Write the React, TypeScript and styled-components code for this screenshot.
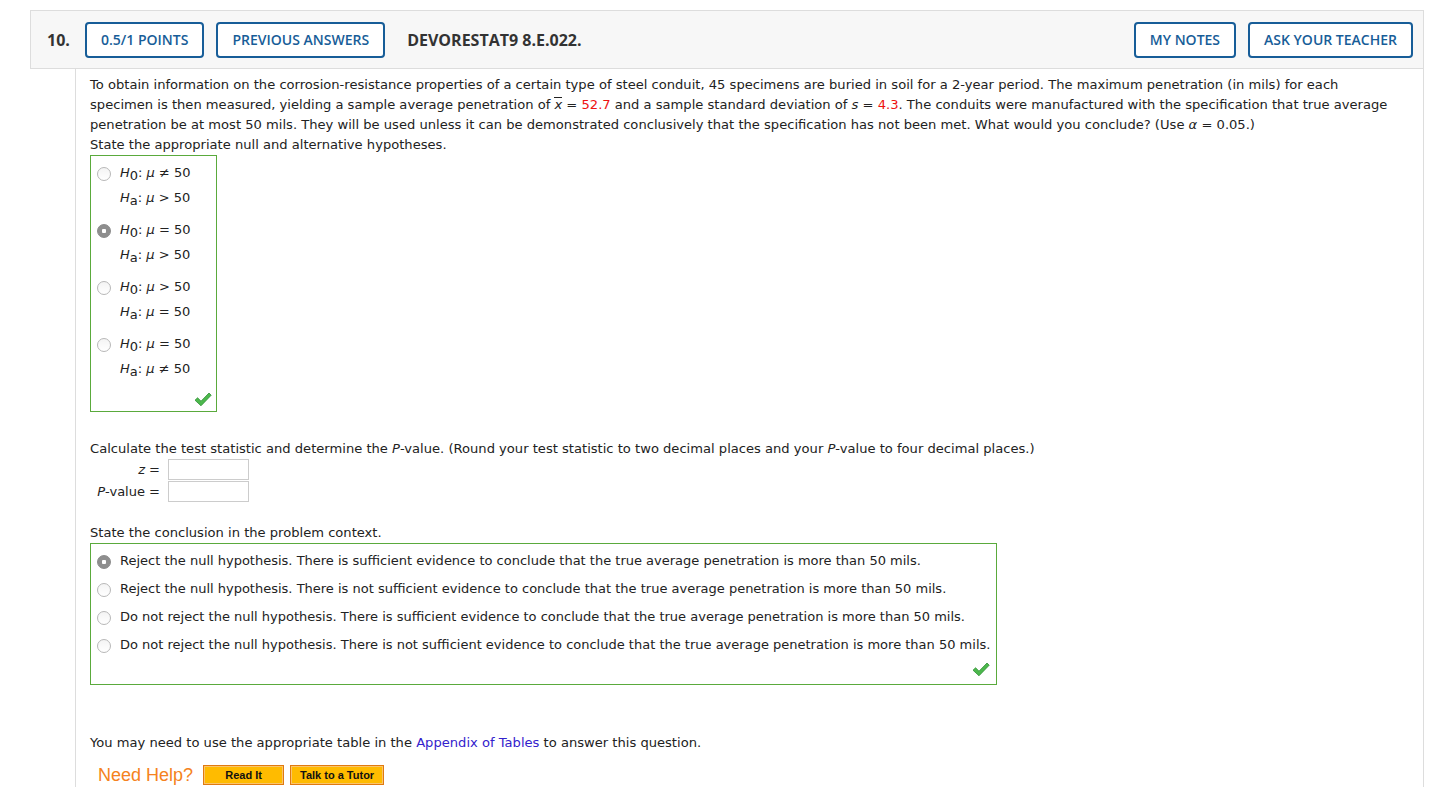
import React from 'react'
import styled, { createGlobalStyle } from 'styled-components'

const GlobalStyle = createGlobalStyle`
  html, body {
    margin: 0;
    padding: 0;
    background: #ffffff;
  }
  body {
    font-family: "DejaVu Sans", Verdana, sans-serif;
    color: #222222;
  }
`

type Hyp = { h0: string; ha: string }

const hypotheses: Hyp[] = [
  { h0: '≠ 50', ha: '> 50' },
  { h0: '= 50', ha: '> 50' },
  { h0: '> 50', ha: '= 50' },
  { h0: '= 50', ha: '≠ 50' },
]
const selectedHyp = 1

const conclusions = [
  'Reject the null hypothesis. There is sufficient evidence to conclude that the true average penetration is more than 50 mils.',
  'Reject the null hypothesis. There is not sufficient evidence to conclude that the true average penetration is more than 50 mils.',
  'Do not reject the null hypothesis. There is sufficient evidence to conclude that the true average penetration is more than 50 mils.',
  'Do not reject the null hypothesis. There is not sufficient evidence to conclude that the true average penetration is more than 50 mils.',
]
const selectedConclusion = 0

const Check = () => (
  <svg width="18" height="15" viewBox="0 0 18 15">
    <path
      d="M1 8.2 L3.6 5.8 L7 9.2 L15 1 L17.2 3.2 L7 13.8 Z"
      fill="#4cb84c"
      stroke="#2f8f35"
      strokeWidth="0.8"
      strokeLinejoin="round"
    />
  </svg>
)

const App: React.FC = () => {
  return (
    <>
      <GlobalStyle />
      <Page>
        <Header>
          <QNumber>10.</QNumber>
          <HeadButton>0.5/1 POINTS</HeadButton>
          <HeadButton>PREVIOUS ANSWERS</HeadButton>
          <QCode>DEVORESTAT9 8.E.022.</QCode>
          <Spacer />
          <HeadButton>MY NOTES</HeadButton>
          <HeadButton>ASK YOUR TEACHER</HeadButton>
        </Header>
        <Body>
          <Para>
            To obtain information on the corrosion-resistance properties of a certain type of steel conduit, 45
            specimens are buried in soil for a 2-year period. The maximum penetration (in mils) for each specimen is
            then measured, yielding a sample average penetration of <Xbar>x</Xbar> = <Red>52.7</Red> and a sample
            standard deviation of <i>s</i> = <Red>4.3</Red>. The conduits were manufactured with the specification
            that true average penetration be at most 50 mils. They will be used unless it can be demonstrated
            conclusively that the specification has not been met. What would you conclude? (Use <i>α</i> = 0.05.)
          </Para>
          <Para>State the appropriate null and alternative hypotheses.</Para>
          <HypBox>
            {hypotheses.map((h, i) => (
              <HypOption key={i}>
                <HypLine>
                  <Radio checked={i === selectedHyp} />
                  <span>
                    <i>H</i>
                    <Sub>0</Sub>: <i>μ</i> {h.h0}
                  </span>
                </HypLine>
                <HypLine>
                  <RadioGap />
                  <span>
                    <i>H</i>
                    <Sub>a</Sub>: <i>μ</i> {h.ha}
                  </span>
                </HypLine>
              </HypOption>
            ))}
            <CheckRow>
              <Check />
            </CheckRow>
          </HypBox>

          <Para $top={27}>
            Calculate the test statistic and determine the <i>P</i>-value. (Round your test statistic to two decimal
            places and your <i>P</i>-value to four decimal places.)
          </Para>
          <AnswerGrid>
            <AnswerLabel>
              <i>z</i> =
            </AnswerLabel>
            <AnswerInput />
            <AnswerLabel>
              <i>P</i>-value =
            </AnswerLabel>
            <AnswerInput />
          </AnswerGrid>

          <Para $top={21}>State the conclusion in the problem context.</Para>
          <ConcBox>
            {conclusions.map((c, i) => (
              <ConcLine key={i}>
                <Radio checked={i === selectedConclusion} />
                <span>{c}</span>
              </ConcLine>
            ))}
            <CheckRow $conc>
              <Check />
            </CheckRow>
          </ConcBox>

          <Para $top={48}>
            You may need to use the appropriate table in the <Link>Appendix of Tables</Link> to answer this question.
          </Para>
          <HelpRow>
            <NeedHelp>Need Help?</NeedHelp>
            <HelpButton $w={81}>Read It</HelpButton>
            <HelpButton $w={94}>Talk to a Tutor</HelpButton>
          </HelpRow>
        </Body>
      </Page>
    </>
  )
}

const Page = styled.div`
  margin: 10px 0 0 30px;
  width: 1394px;
`

const Header = styled.div`
  display: flex;
  align-items: center;
  gap: 12px;
  height: 57px;
  padding: 0 10px 0 16px;
  background: #f7f7f7;
  border: 1px solid #dddddd;
  font-family: "Open Sans", "Liberation Sans", sans-serif;
`

const QNumber = styled.div`
  font-size: 16px;
  font-weight: 700;
  color: #333333;
  width: 26px;
`

const HeadButton = styled.div`
  display: flex;
  align-items: center;
  height: 36px;
  box-sizing: border-box;
  padding: 0 14px;
  border: 2px solid #175d98;
  border-radius: 4px;
  background: #ffffff;
  color: #175d98;
  font-size: 14px;
  font-weight: 600;
  white-space: nowrap;
`

const QCode = styled.div`
  margin-left: 10px;
  font-size: 16px;
  font-weight: 700;
  color: #333333;
`

const Spacer = styled.div`
  flex: 1;
`

const Body = styled.div`
  margin-left: 45px;
  border-left: 1px solid #dddddd;
  border-right: 1px solid #dddddd;
  padding: 6px 0 4px 14px;
  font-size: 13px;
  line-height: 20px;
`

const Para = styled.div<{ $top?: number }>`
  margin-top: ${(p) => p.$top ?? 0}px;
  padding-right: 26px;
  font-size: 13.1px;
`

const Red = styled.span`
  color: #ee1111;
`

const Xbar = styled.i`
  display: inline-block;
  line-height: 14px;
  border-top: 1px solid #222222;
`

const Link = styled.span`
  color: #3322cc;
`

const Sub = styled.span`
  display: inline-block;
  line-height: 1;
  transform: translateY(3px);
`

const HypBox = styled.div`
  width: 127px;
  box-sizing: border-box;
  border: 1px solid #5aaa3c;
  padding: 4px 0 0 6px;
`

const HypOption = styled.div`
  margin-bottom: 7px;

  &:nth-last-child(2) {
    margin-bottom: 0;
  }
`

const HypLine = styled.div`
  display: flex;
  align-items: center;
  gap: 9px;
  height: 25px;
`

const ConcBox = styled.div`
  display: inline-block;
  border: 1px solid #5aaa3c;
  padding: 3px 6px 0 6px;
`

const ConcLine = styled.div`
  display: flex;
  align-items: center;
  gap: 9px;
  height: 28px;
  white-space: nowrap;
`

const Radio = styled.span<{ checked: boolean }>`
  display: inline-block;
  flex: none;
  width: 14px;
  height: 14px;
  box-sizing: border-box;
  border-radius: 50%;
  margin-top: 2px;
  border: 1px solid ${(p) => (p.checked ? '#8a8a8a' : '#b8b8b8')};
  background: ${(p) =>
    p.checked
      ? 'radial-gradient(circle, #ffffff 0 2px, #8e8e8e 2.5px)'
      : 'linear-gradient(#f4f4f4, #ffffff)'};
`

const RadioGap = styled.span`
  width: 14px;
  flex: none;
`

const CheckRow = styled.div<{ $conc?: boolean }>`
  display: flex;
  justify-content: flex-end;
  height: ${(p) => (p.$conc ? 25 : 30)}px;
  padding: ${(p) => (p.$conc ? '3px 0 0 0' : '11px 4px 0 0')};
  box-sizing: border-box;
`

const AnswerGrid = styled.div`
  display: grid;
  grid-template-columns: 70px 81px;
  column-gap: 8px;
  row-gap: 1px;
  align-items: center;
`

const AnswerLabel = styled.div`
  text-align: right;
  line-height: 21px;
`

const AnswerInput = styled.div`
  height: 21px;
  box-sizing: border-box;
  border: 1px solid #cccccc;
  background: #ffffff;
`

const HelpRow = styled.div`
  display: flex;
  align-items: center;
  gap: 6px;
  margin-top: 11px;
  margin-left: 8px;
  height: 22px;
`

const NeedHelp = styled.span`
  font-family: "Liberation Sans", Arial, sans-serif;
  font-size: 18px;
  color: #f58220;
  margin-right: 4px;
`

const HelpButton = styled.span<{ $w: number }>`
  display: flex;
  align-items: center;
  justify-content: center;
  width: ${(p) => p.$w}px;
  height: 20px;
  box-sizing: border-box;
  border: 1px solid #e07a10;
  outline: 1px solid #fbc46a;
  outline-offset: -2px;
  background: #ffbb00;
  font-family: "Liberation Sans", Arial, sans-serif;
  font-size: 11px;
  font-weight: 700;
  color: #111111;
`

export default App
